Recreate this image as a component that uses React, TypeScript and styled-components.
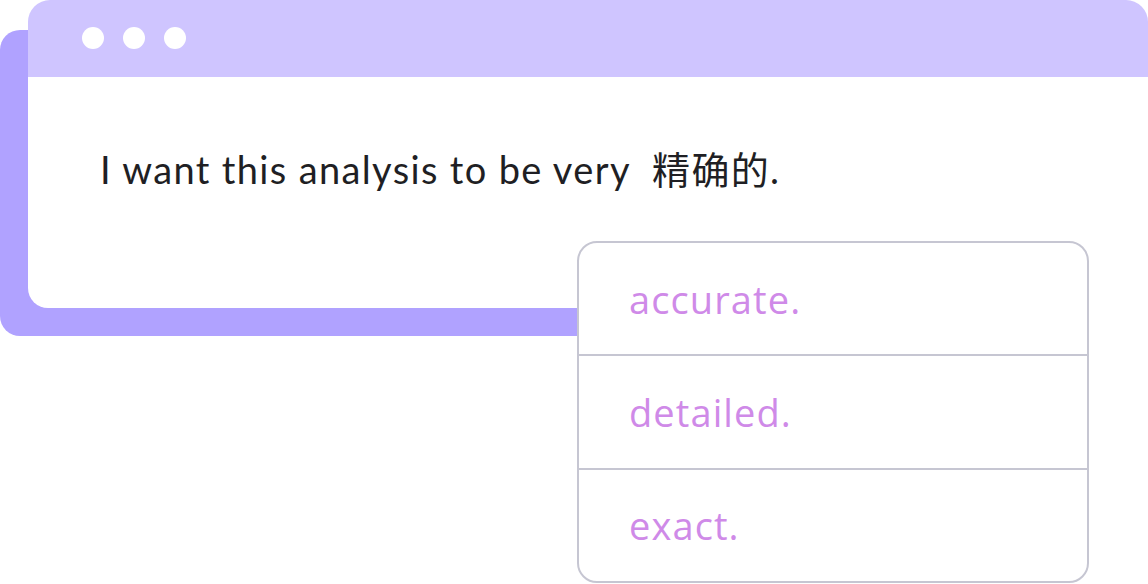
import React from "react";
import styled, { createGlobalStyle } from "styled-components";

const GlobalStyle = createGlobalStyle`
  html, body {
    margin: 0;
    padding: 0;
    background: #ffffff;
  }
  body {
    width: 1148px;
    height: 584px;
    overflow: hidden;
  }
`;

const Stage = styled.div`
  position: relative;
  width: 1148px;
  height: 584px;
  overflow: hidden;
  background: #ffffff;
`;

/* window with the flat purple backdrop peeking out bottom-left */
const Frame = styled.div`
  position: relative;
  margin-left: 28px;
  width: 1120px;
  height: 308px;
  &::before {
    content: "";
    position: absolute;
    left: -28px;
    top: 30px;
    width: 1040px;
    height: 306px;
    border-radius: 20px;
    background: #b0a2ff;
  }
`;

const Window = styled.div`
  position: relative;
  height: 100%;
  background: #ffffff;
  border-radius: 22px 22px 0 20px;
  overflow: hidden;
  display: flex;
  flex-direction: column;
`;

const TitleBar = styled.div`
  height: 77px;
  flex-shrink: 0;
  background: #cfc5ff;
  display: flex;
  align-items: center;
  gap: 19px;
  padding-left: 54px;
  padding-bottom: 2px;
  box-sizing: border-box;
`;

const Dot = styled.span`
  width: 22px;
  height: 22px;
  border-radius: 50%;
  background: #ffffff;
`;

const Prompt = styled.p`
  margin: 0;
  padding: 69px 0 0 72px;
  font-family: "Lato", "Noto Sans CJK SC", sans-serif;
  font-size: 38px;
  line-height: 46px;
  color: #1f1f24;
  letter-spacing: 1.35px;
`;

const Suggestions = styled.ul`
  position: absolute;
  left: 577px;
  top: 241px;
  width: 512px;
  height: 342px;
  margin: 0;
  padding: 0;
  list-style: none;
  box-sizing: border-box;
  border: 2px solid #c6c6d2;
  border-radius: 20px;
  background: #ffffff;
  display: flex;
  flex-direction: column;
`;

const Option = styled.li<{ $last?: boolean }>`
  flex: 1;
  display: flex;
  align-items: center;
  padding-left: 50px;
  font-family: "Open Sans", sans-serif;
  font-size: 38px;
  letter-spacing: 1.1px;
  color: #cf8ae8;
  border-bottom: ${(p) => (p.$last ? "none" : "2px solid #c6c6d2")};
`;

const options = ["accurate.", "detailed.", "exact."];

export default function App() {
  return (
    <>
      <GlobalStyle />
      <Stage>
        <Frame>
          <Window>
            <TitleBar>
              <Dot />
              <Dot />
              <Dot />
            </TitleBar>
            <Prompt>I want this analysis to be very&nbsp; 精确的.</Prompt>
          </Window>
        </Frame>
        <Suggestions>
          {options.map((o, i) => (
            <Option key={o} $last={i === options.length - 1}>
              {o}
            </Option>
          ))}
        </Suggestions>
      </Stage>
    </>
  );
}
